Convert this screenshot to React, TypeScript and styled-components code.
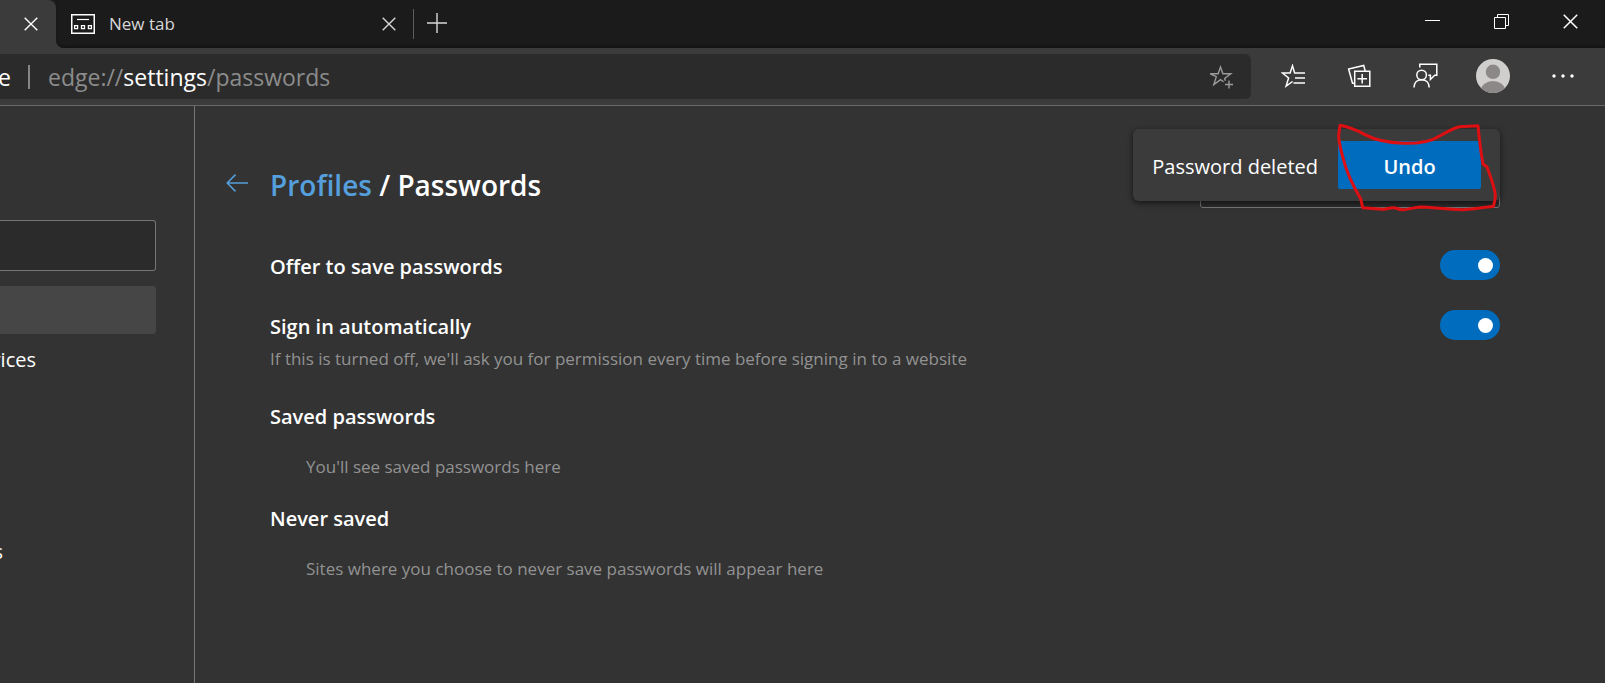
import React, { useState } from "react";
import styled, { createGlobalStyle } from "styled-components";

const color = {
  strip: "#1b1b1b",
  chrome: "#3b3b3b",
  field: "#2b2b2b",
  page: "#333333",
  line: "#767676",
  muted: "#929292",
  link: "#559fdc",
  accent: "#006cbe",
};

const GlobalStyle = createGlobalStyle`
  *, *::before, *::after { box-sizing: border-box; }
  body {
    margin: 0;
    background: ${color.page};
    color: #ffffff;
    font-family: "Open Sans", "Noto Sans", sans-serif;
  }
  button, input { font: inherit; color: inherit; }
  h1, h2, p, ul { margin: 0; padding: 0; }
`;

const Window = styled.div`
  display: flex;
  flex-direction: column;
  min-height: 100vh;
`;

const PlainButton = styled.button`
  display: flex;
  align-items: center;
  justify-content: center;
  padding: 0;
  border: 0;
  background: none;
`;

const TabStrip = styled.header`
  display: flex;
  height: 48px;
  background: ${color.strip};
`;

const ActiveTab = styled.div`
  display: flex;
  align-items: center;
  justify-content: flex-end;
  width: 56px;
  padding-right: 13px;
  background: ${color.chrome};
  border-top-right-radius: 8px;
`;

const StripRest = styled.div`
  flex: 1;
  display: flex;
  background: ${color.chrome};
`;

const StripSurface = styled.div`
  flex: 1;
  display: flex;
  align-items: center;
  background: ${color.strip};
  border-bottom-left-radius: 8px;
  box-shadow: inset 0 -2px 2px #151515;
`;

const Tab = styled.div`
  display: flex;
  align-items: center;
  gap: 14px;
  width: 358px;
  height: 30px;
  padding: 0 12px 0 15px;
  border-right: 1px solid #5c5c5c;
  color: #d8d8d8;
`;

const TabTitle = styled.span`
  flex: 1;
  font-size: 17px;
  line-height: 24px;
`;

const TabClose = styled(PlainButton)`
  width: 24px;
  height: 24px;
`;

const NewTabButton = styled(PlainButton)`
  width: 46px;
  height: 48px;
  padding-bottom: 2px;
`;

const WindowControls = styled.div`
  display: flex;
  align-self: flex-start;
  margin-left: auto;
`;

const WindowButton = styled(PlainButton)`
  width: 69px;
  height: 43px;
`;

const Toolbar = styled.div`
  display: flex;
  align-items: center;
  height: 58px;
  padding-right: 7px;
  background: ${color.chrome};
  border-bottom: 1px solid #686868;
`;

const AddressBar = styled.div`
  flex: 1;
  display: flex;
  align-items: center;
  height: 45px;
  margin-right: 9px;
  padding-right: 12px;
  background: ${color.field};
  border-radius: 0 6px 6px 0;
  font-size: 23px;
  line-height: 32px;
`;

const SiteLabel = styled.span`
  display: flex;
  justify-content: flex-end;
  width: 11px;
  overflow: hidden;
`;

const AddressDivider = styled.span`
  width: 2px;
  height: 24px;
  margin: 0 18px 0 17px;
  background: #858585;
`;

const Address = styled.div`
  flex: 1;
  color: #8c8c8c;
`;

const AddressHost = styled.span`
  color: #ffffff;
`;

const AddFavorite = styled(PlainButton)`
  width: 36px;
  height: 36px;
`;

const ToolButton = styled(PlainButton)<{ $wide?: boolean }>`
  width: ${(p) => (p.$wide ? 70 : 66)}px;
  height: 45px;
  padding-bottom: 2px;
`;

const Body = styled.div`
  flex: 1;
  display: flex;
`;

const Sidebar = styled.aside`
  width: 195px;
  padding: 114px 38px 0 0;
  border-right: 1px solid ${color.line};
`;

const SettingsSearch = styled.input`
  display: block;
  width: 100%;
  height: 51px;
  border: 1px solid ${color.line};
  border-left: 0;
  border-radius: 0 3px 3px 0;
  background: ${color.field};
`;

const NavList = styled.ul`
  display: grid;
  grid-template-rows: repeat(7, 48px);
  margin-top: 15px;
  list-style: none;
`;

const NavItem = styled.li<{ $row: number }>`
  grid-row: ${(p) => p.$row};
  display: flex;
  align-items: center;
`;

const NavLink = styled.a<{ $width?: number; $current?: boolean }>`
  display: flex;
  align-items: center;
  justify-content: flex-end;
  width: ${(p) => (p.$width ? `${p.$width}px` : "100%")};
  height: 48px;
  padding-top: 4px;
  overflow: hidden;
  border-radius: 0 3px 3px 0;
  background: ${(p) => (p.$current ? "#464646" : "transparent")};
  color: #ffffff;
  font-size: 20px;
  line-height: 30px;
  text-decoration: none;
`;

const Main = styled.main`
  position: relative;
  flex: 1;
  padding: 54px 105px 0 30px;
`;

const PageHeader = styled.div`
  display: flex;
  align-items: center;
  height: 48px;
`;

const BackButton = styled(PlainButton)`
  width: 24px;
  height: 48px;
  margin-right: 21px;
  padding-bottom: 2px;
`;

const PageTitle = styled.h1`
  flex: 1;
  padding-top: 2px;
  font-size: 28px;
  font-weight: 600;
  line-height: 48px;
`;

const TitleLink = styled.a`
  color: ${color.link};
  text-decoration: none;
`;

const PasswordSearch = styled.input`
  width: 300px;
  height: 48px;
  border: 1px solid ${color.line};
  border-radius: 3px;
  background: ${color.field};
`;

const Content = styled.div`
  padding: 42px 0 40px 45px;
`;

const SettingRow = styled.div`
  display: flex;
  align-items: flex-end;
  height: 30px;
  margin-bottom: 30px;

  &:has(+ p) {
    margin-bottom: 4px;
  }
`;

const SettingLabel = styled.label`
  flex: 1;
  font-size: 20px;
  font-weight: 600;
  line-height: 26px;
`;

const Switch = styled.input`
  appearance: none;
  display: flex;
  align-items: center;
  justify-content: flex-start;
  width: 60px;
  height: 30px;
  margin: 0;
  padding: 0 7px;
  border-radius: 15px;
  background: #767676;

  &::before {
    content: "";
    width: 15px;
    height: 15px;
    border-radius: 50%;
    background: #ffffff;
  }

  &:checked {
    justify-content: flex-end;
    background: ${color.accent};
  }
`;

const Hint = styled.p<{ $indent?: boolean }>`
  padding-left: ${(p) => (p.$indent ? 36 : 0)}px;
  color: ${color.muted};
  font-size: 17px;
  line-height: 30px;
`;

const Groups = styled.div`
  display: flex;
  flex-direction: column;
  gap: 22px;
  margin-top: 28px;
`;

const Group = styled.section`
  display: flex;
  flex-direction: column;
  gap: 20px;
`;

const GroupTitle = styled.h2`
  font-size: 20px;
  font-weight: 600;
  line-height: 30px;
`;

const Toast = styled.div`
  position: absolute;
  top: 23px;
  right: 105px;
  display: flex;
  align-items: center;
  gap: 20px;
  height: 72px;
  padding: 0 19px;
  border-radius: 6px;
  background: ${color.chrome};
  box-shadow: 0 2px 6px rgba(0, 0, 0, 0.6);
  font-size: 20px;
  line-height: 30px;
`;

const ToastText = styled.span`
  padding-top: 4px;
`;

const UndoButton = styled(PlainButton)`
  width: 143px;
  height: 48px;
  padding-top: 4px;
  border-radius: 2px;
  background: ${color.accent};
  font-weight: 600;
`;

const Scribble = styled.svg`
  position: absolute;
  top: -9px;
  right: -1px;
  pointer-events: none;
`;

const CloseIcon = ({ size, stroke }: { size: number; stroke: string }) => (
  <svg width={size} height={size} viewBox="0 0 14 14" fill="none" stroke={stroke} strokeWidth="1.4">
    <path d="M.7.7l12.6 12.6M13.3.7L.7 13.3" />
  </svg>
);

const TabPageIcon = () => (
  <svg width="24" height="20" viewBox="0 0 24 20" fill="none" stroke="#fff">
    <rect x=".75" y=".75" width="22.5" height="18.5" strokeWidth="1.5" />
    <path d="M6 5.5h12" strokeWidth="1.2" />
    <path d="M3.6 11.6h3v3h-3zM10.5 11.6h3v3h-3zM17.4 11.6h3v3h-3z" strokeWidth="1.3" />
  </svg>
);

const PlusIcon = () => (
  <svg width="20" height="20" viewBox="0 0 20 20" stroke="#d8d8d8" strokeWidth="1.4">
    <path d="M0 10h20M10 0v20" />
  </svg>
);

const MinimizeIcon = () => (
  <svg width="15" height="15" viewBox="0 0 15 15" stroke="#fff">
    <path d="M0 6.5h15" />
  </svg>
);

const RestoreIcon = () => (
  <svg width="15" height="15" viewBox="0 0 15 15" fill="none" stroke="#fff">
    <path d="M.5 3.5h11v11H.5zM3.5 3.5v-3h11v11h-3" />
  </svg>
);

const AddStarIcon = () => (
  <svg width="24" height="24" viewBox="0 0 24 24" fill="none" stroke="#9a9a9a" strokeWidth="1.4">
    <path d="M14.6 16.8l-3.1-2.2-6.7 5 2.5-8L1.2 8.8h7.9L11.5 2l2.4 6.8h7.9l-6.2 4.6.8 2.4" />
    <path d="M16 19.5h8M20 15.5v8" />
  </svg>
);

const FavoritesIcon = () => (
  <svg width="24" height="24" viewBox="0 0 24 24" fill="none" stroke="#fff" strokeWidth="1.5">
    <path d="M11.6 17.5l-6.5 4.6 2.5-8.2L1.4 9h7.7l2.4-7.2L13.6 9H24M14 14h10M12.5 19H24" />
  </svg>
);

const CollectionsIcon = () => (
  <svg width="24" height="24" viewBox="0 0 24 24" fill="none" stroke="#fff" strokeWidth="1.5">
    <path d="M7.7 7.2h15.1v15.1H7.7zM15.2 10v9.6M10.4 14.8H20" />
    <path d="M18.2 7L16.7 1.4 1.6 5l3.9 14.2H7.6" />
  </svg>
);

const FeedbackIcon = () => (
  <svg width="25" height="25" viewBox="0 0 25 25" fill="none" stroke="#fff" strokeWidth="1.5">
    <circle cx="8.6" cy="12" r="4.8" />
    <path d="M1 24.6c0-4.8 3.1-7.8 7.6-7.8s7.6 3 7.6 7.8" />
    <path d="M6.8 4.6V1.2h17v11.1h-2.1l-4.3 4.2v-4.2h-2.1" />
  </svg>
);

const Avatar = () => (
  <svg width="34" height="34" viewBox="0 0 34 34">
    <defs>
      <clipPath id="avatar-clip">
        <circle cx="17" cy="17" r="17" />
      </clipPath>
    </defs>
    <g clipPath="url(#avatar-clip)">
      <rect width="34" height="34" fill="#d0cfcd" />
      <circle cx="17" cy="12.8" r="7.2" fill="#8b8887" />
      <ellipse cx="17" cy="31" rx="12" ry="9" fill="#8b8887" />
    </g>
  </svg>
);

const MoreIcon = () => (
  <svg width="22" height="4" viewBox="0 0 22 4" fill="#fff">
    <circle cx="2" cy="2" r="1.7" />
    <circle cx="11" cy="2" r="1.7" />
    <circle cx="20" cy="2" r="1.7" />
  </svg>
);

const BackIcon = () => (
  <svg width="22" height="18" viewBox="0 0 22 18" fill="none" stroke={color.link} strokeWidth="1.5">
    <path d="M22 9H1.2M9.5.6L1.2 9l8.3 8.4" />
  </svg>
);

const ToggleSetting = ({ id, label }: { id: string; label: string }) => {
  const [on, setOn] = useState(true);
  return (
    <SettingRow>
      <SettingLabel htmlFor={id}>{label}</SettingLabel>
      <Switch id={id} type="checkbox" role="switch" checked={on} onChange={() => setOn(!on)} />
    </SettingRow>
  );
};

const App = () => (
  <>
    <GlobalStyle />
    <Window>
      <TabStrip>
        <ActiveTab>
          <TabClose aria-label="Close settings tab">
            <CloseIcon size={14} stroke="#fff" />
          </TabClose>
        </ActiveTab>
        <StripRest>
          <StripSurface>
            <Tab>
              <TabPageIcon />
              <TabTitle>New tab</TabTitle>
              <TabClose aria-label="Close tab">
                <CloseIcon size={14} stroke="#d8d8d8" />
              </TabClose>
            </Tab>
            <NewTabButton aria-label="New tab">
              <PlusIcon />
            </NewTabButton>
            <WindowControls>
              <WindowButton aria-label="Minimize">
                <MinimizeIcon />
              </WindowButton>
              <WindowButton aria-label="Restore">
                <RestoreIcon />
              </WindowButton>
              <WindowButton aria-label="Close window">
                <CloseIcon size={15} stroke="#fff" />
              </WindowButton>
            </WindowControls>
          </StripSurface>
        </StripRest>
      </TabStrip>

      <Toolbar>
        <AddressBar>
          <SiteLabel>e</SiteLabel>
          <AddressDivider />
          <Address>
            edge://<AddressHost>settings</AddressHost>/passwords
          </Address>
          <AddFavorite aria-label="Add to favorites">
            <AddStarIcon />
          </AddFavorite>
        </AddressBar>
        <ToolButton aria-label="Favorites">
          <FavoritesIcon />
        </ToolButton>
        <ToolButton aria-label="Collections">
          <CollectionsIcon />
        </ToolButton>
        <ToolButton aria-label="Send feedback">
          <FeedbackIcon />
        </ToolButton>
        <ToolButton $wide aria-label="Profile">
          <Avatar />
        </ToolButton>
        <ToolButton $wide aria-label="More">
          <MoreIcon />
        </ToolButton>
      </Toolbar>

      <Body>
        <Sidebar>
          <SettingsSearch type="search" aria-label="Search settings" />
          <nav>
            <NavList>
              <NavItem $row={1}>
                <NavLink href="#profiles" $current aria-label="Profiles" />
              </NavItem>
              <NavItem $row={2}>
                <NavLink href="#services" $width={36}>vices</NavLink>
              </NavItem>
              <NavItem $row={6}>
                <NavLink href="#permissions" $width={3}>s</NavLink>
              </NavItem>
            </NavList>
          </nav>
        </Sidebar>

        <Main>
          <PageHeader>
            <BackButton aria-label="Back">
              <BackIcon />
            </BackButton>
            <PageTitle>
              <TitleLink href="#profiles">Profiles</TitleLink> / Passwords
            </PageTitle>
            <PasswordSearch type="search" aria-label="Search passwords" />
          </PageHeader>

          <Content>
            <ToggleSetting id="offer-save" label="Offer to save passwords" />
            <ToggleSetting id="auto-sign-in" label="Sign in automatically" />
            <Hint>
              If this is turned off, we'll ask you for permission every time before signing in to a website
            </Hint>
            <Groups>
              <Group>
                <GroupTitle>Saved passwords</GroupTitle>
                <Hint $indent>You'll see saved passwords here</Hint>
              </Group>
              <Group>
                <GroupTitle>Never saved</GroupTitle>
                <Hint $indent>Sites where you choose to never save passwords will appear here</Hint>
              </Group>
            </Groups>
          </Content>

          <Toast role="status">
            <ToastText>Password deleted</ToastText>
            <UndoButton>Undo</UndoButton>
            <Scribble
              width="167"
              height="94"
              viewBox="642 30 501 282"
              fill="none"
              stroke="#dd0f12"
              strokeWidth="9"
              strokeLinejoin="round"
              strokeLinecap="round"
              aria-hidden="true"
            >
              <path d="M660 46C690 52 710 60 735 74C765 90 800 98 850 100C900 101 930 96 955 80C980 66 1000 54 1018 50L1074 47C1078 90 1082 125 1089 162L1101 171C1112 200 1125 235 1126 258C1126 272 1122 282 1120 289C1085 294 1060 298 1030 299C985 300 940 291 900 291C880 293 860 300 845 299C835 298 830 293 818 293C806 293 800 298 785 298L728 293L722 266C700 230 680 190 668 140C660 110 655 90 656 75Z" />
            </Scribble>
          </Toast>
        </Main>
      </Body>
    </Window>
  </>
);

export default App;
